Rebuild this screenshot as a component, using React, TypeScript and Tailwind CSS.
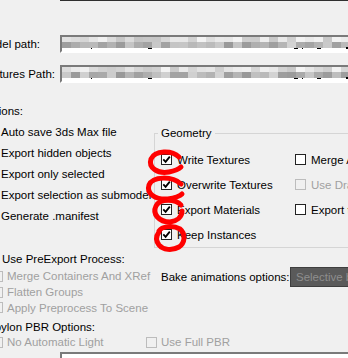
import React from 'react';

// pseudo-random grays for the pixelated (mosaic) path fields
const shade = (seed: number, i: number, lo: number, hi: number) => {
  const v = Math.abs(Math.sin(seed * 97.3 + i * 12.9898) * 43758.5453) % 1;
  const g = Math.round(lo + v * (hi - lo));
  return `rgb(${g},${g},${g})`;
};

const blocks = Array.from({ length: 33 }, (_, i) => i);

const PathField = ({ seed }: { seed: number }) => (
  <div className="h-[18px] w-[300px] shrink-0 border-2 border-t-[#7a7a7a] border-l-[#7a7a7a] border-b-white border-r-white bg-white">
    <svg width="296" height="14" className="block">
      {blocks.map((i) => (
        <rect key={`a${i}`} x={i * 9} y={0} width={9} height={5} fill={shade(seed, i, 196, 244)} />
      ))}
      {blocks.map((i) => (
        <rect key={`b${i}`} x={i * 9} y={5} width={9} height={6} fill={shade(seed + 3, i, 150, 212)} />
      ))}
      <rect x={29} y={11} width={1} height={1} fill="#000" />
      <rect x={86} y={11} width={4} height={1} fill="#000" />
      <rect x={232} y={11} width={4} height={1} fill="#000" />
      <rect x={240} y={11} width={1} height={1} fill="#000" />
      <rect x={255} y={11} width={4} height={1} fill="#000" />
      <rect x={284} y={10} width={2} height={2} fill="#000" />
    </svg>
  </div>
);

const Box = ({ checked = false, disabled = false, className = '' }: { checked?: boolean; disabled?: boolean; className?: string }) => (
  <span
    className={`flex h-[11px] w-[11px] shrink-0 items-center justify-center border ${
      disabled ? 'border-[#bcbcbc] bg-[#f0f0f0]' : 'border-[#222] bg-white'
    } ${className}`}
  >
    {checked && (
      <svg viewBox="0 0 9 9" className="h-[9px] w-[9px]">
        <path d="M1.3 4.4 L3.6 6.8 L7.8 1.6" fill="none" stroke="#000" strokeWidth="1.8" />
      </svg>
    )}
  </span>
);

const leftOptions = [
  'Auto save 3ds Max file',
  'Export hidden objects',
  'Export only selected',
  'Export selection as submodel',
  'Generate .manifest',
];

const geometry: { label: string; checked?: boolean; disabled?: boolean }[][] = [
  [{ label: 'Write Textures', checked: true }, { label: 'Merge AO map' }],
  [{ label: 'Overwrite Textures', checked: true }, { label: 'Use Draco compression', disabled: true }],
  [{ label: 'Export Materials', checked: true }, { label: 'Export tangents' }],
  [{ label: 'Keep Instances', checked: true }],
];

const preExport = [
  { label: 'Merge Containers And XRef', h: 'h-[16px]' },
  { label: 'Flatten Groups', h: 'h-[16px]' },
  { label: 'Apply Preprocess To Scene', h: 'h-[15px]' },
];

// cut-off label: right end sits at the given edge, start runs off to the left
const ClipLabel = ({ text, className }: { text: string; className: string }) => (
  <div className={`flex shrink-0 items-center justify-end overflow-hidden whitespace-nowrap ${className}`}>
    <span>{text}</span>
  </div>
);

export default function App() {
  return (
    <div className="relative h-[358px] w-[348px] overflow-hidden bg-[#f0f0f0] font-['Liberation_Sans',Arial,sans-serif] text-[11.5px] leading-[14px] text-black">
      {/* edge of the element above */}
      <div className="ml-[60px] h-px bg-[#2f2f2f]" />

      {/* path fields */}
      <div className="mt-[34px] flex items-center">
        <ClipLabel text="Model path:" className="h-[18px] w-[60px] pr-[20px]" />
        <PathField seed={1} />
      </div>
      <div className="mt-[12px] flex items-center">
        <ClipLabel text="Textures Path:" className="h-[18px] w-[60px] pr-[5px]" />
        <PathField seed={7} />
      </div>

      <ClipLabel text="Options:" className="mt-[21px] h-[14px] w-[23px]" />

      {/* options + geometry group */}
      <div className="mt-[3px] flex">
        <div className="w-[154px] shrink-0">
          {leftOptions.map((t) => (
            <div key={t} className="flex h-[21px] items-center whitespace-nowrap pl-px">
              {t}
            </div>
          ))}
        </div>
        <fieldset className="mt-[5px] w-[240px] shrink-0 border border-[#d5d5d5] pl-[6px]">
          <legend className="-ml-[3px] px-[3px] leading-[14px]">Geometry</legend>
          <div className="pt-[7px]">
            {geometry.map((row, r) => (
              <div key={r} className="flex h-[25px] items-center">
                {row.map((item) => (
                  <div
                    key={item.label}
                    className={`flex w-[134px] shrink-0 items-center gap-[5px] whitespace-nowrap ${
                      item.disabled ? 'text-[#a0a0a0]' : ''
                    }`}
                  >
                    <Box checked={item.checked} disabled={item.disabled} />
                    <span>{item.label}</span>
                  </div>
                ))}
              </div>
            ))}
          </div>
        </fieldset>
      </div>

      {/* pre-export */}
      <div className="mt-[4px] h-[14px] whitespace-nowrap pl-[2px]">Use PreExport Process:</div>
      <div className="mt-[2px] flex">
        <div className="w-[160px] shrink-0">
          {preExport.map((p) => (
            <div key={p.label} className={`flex items-center gap-[4px] whitespace-nowrap text-[#a0a0a0] ${p.h}`}>
              <Box disabled className="-ml-[8px]" />
              <span>{p.label}</span>
            </div>
          ))}
        </div>
        <div className="-mt-px flex h-[20px] items-center whitespace-nowrap">
          <span className="w-[130px] shrink-0 pl-px">Bake animations options:</span>
          <div className="flex h-[20px] w-[90px] shrink-0 items-center border border-[#3e3e3e] bg-[#5a5a5a] pl-[5px] text-[#8e8e8e]">
            Selective bake
          </div>
        </div>
      </div>

      {/* PBR */}
      <ClipLabel text="Babylon PBR Options:" className="mt-[5px] h-[14px] w-[95px]" />
      <div className="flex h-[16px] items-center whitespace-nowrap text-[#a0a0a0]">
        <div className="flex w-[146px] shrink-0 items-center gap-[4px]">
          <Box disabled className="-ml-[8px]" />
          <span>No Automatic Light</span>
        </div>
        <div className="flex items-center gap-[4px]">
          <Box disabled />
          <span>Use Full PBR</span>
        </div>
      </div>

      <div className="mt-[2px] flex">
        <ClipLabel text="Environment:" className="h-[18px] w-[60px] items-end pr-[4px]" />
        <div className="h-[18px] w-[300px] shrink-0 border-2 border-t-[#7a7a7a] border-l-[#7a7a7a] border-b-white border-r-white bg-white" />
      </div>

      {/* red hand-drawn marks over the geometry checkboxes */}
      <svg className="pointer-events-none absolute inset-0" width="348" height="358" viewBox="0 0 348 358">
        <g fill="none" stroke="#ff0000" strokeWidth="5" strokeLinecap="round" strokeLinejoin="round">
          <path d="M179,157 C172,150 155,150 151,159 C148,168 158,174 169,172 C174,171 178,170 181,167" />
          <path d="M181,184 C172,176 153,176 149,185 C146,194 156,200 168,199 C174,198 179,197 182,194" />
          <path d="M181,205 C176,199 160,198 156,206 C152,214 159,222 170,222 C177,221 182,217 182,211" />
          <path d="M159,231 C162,226 173,225 180,229 C186,234 185,243 179,247 C172,251 163,250 159,245 C156,241 156,236 159,232" />
        </g>
      </svg>
    </div>
  );
}
